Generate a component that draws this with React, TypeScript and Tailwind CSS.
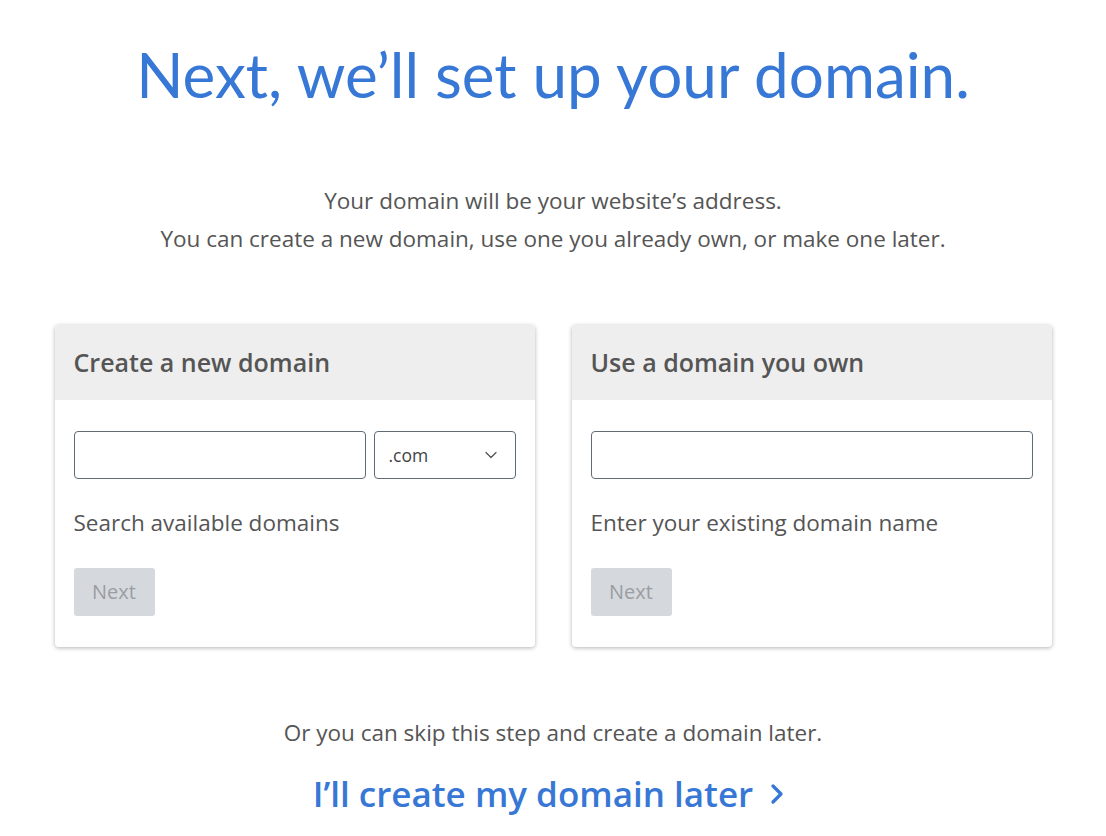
import {ChevronDown, ChevronRight} from 'lucide-react';

function DomainCard({title, hint, withSelect}: {title: string; hint: string; withSelect?: boolean}) {
    return (
        <div className="w-[480px] bg-white rounded-[4px] shadow-[0_1px_4px_rgba(0,0,0,0.3)] overflow-hidden">
            <div className="h-[75px] bg-[#eeeeee] flex items-center px-[19px]">
                <h2 className="text-[25px] font-semibold text-[#555555]">{title}</h2>
            </div>
            <div className="px-[19px] pt-[31px] pb-[31px]">
                <div className="flex gap-2">
                    <input
                        type="text"
                        className="flex-1 h-[48px] border border-[#5f6b75] rounded-[4px] px-3 text-[18px] outline-none"
                    />
                    {withSelect && (
                        <div className="w-[142px] h-[48px] border border-[#5f6b75] rounded-[4px] flex items-center justify-between pl-[14px] pr-[14px] text-[17.5px] text-[#444]">
                            <span>.com</span>
                            <ChevronDown className="w-5 h-5 text-[#555]" strokeWidth={1.5}/>
                        </div>
                    )}
                </div>
                <p className="mt-[29px] text-[22.5px] text-[#555555] leading-[30px]">{hint}</p>
                <button className="mt-[30px] w-[81px] h-[48px] rounded-[3px] bg-[#d5d8dc] text-[20px] text-[#9a9ea3]">
                    Next
                </button>
            </div>
        </div>
    );
}

export default function App() {
    return (
        <div className="w-[1106px] min-h-[836px] bg-white flex flex-col items-center font-['Open_Sans',sans-serif]">
            <h1 className="mt-[34px] text-[62px] leading-[80px] text-[#3777d5] font-['Lato',sans-serif] font-normal">
                Next, we’ll set up your domain.
            </h1>

            <div className="mt-[68px] text-center text-[22.5px] leading-[38px] text-[#555555]">
                <p>Your domain will be your website’s address.</p>
                <p>You can create a new domain, use one you already own, or make one later.</p>
            </div>

            <div className="mt-[67px] flex gap-[37px]">
                <DomainCard title="Create a new domain" hint="Search available domains" withSelect/>
                <DomainCard title="Use a domain you own" hint="Enter your existing domain name"/>
            </div>

            <p className="mt-[71px] text-[22.5px] text-[#555555] leading-[30px]">
                Or you can skip this step and create a domain later.
            </p>
            <a href="#" className="mt-[20px] flex items-center gap-2 text-[35px] font-semibold text-[#3777d5]">
                I’ll create my domain later
                <ChevronRight className="w-8 h-8" strokeWidth={2.5}/>
            </a>
        </div>
    );
}
